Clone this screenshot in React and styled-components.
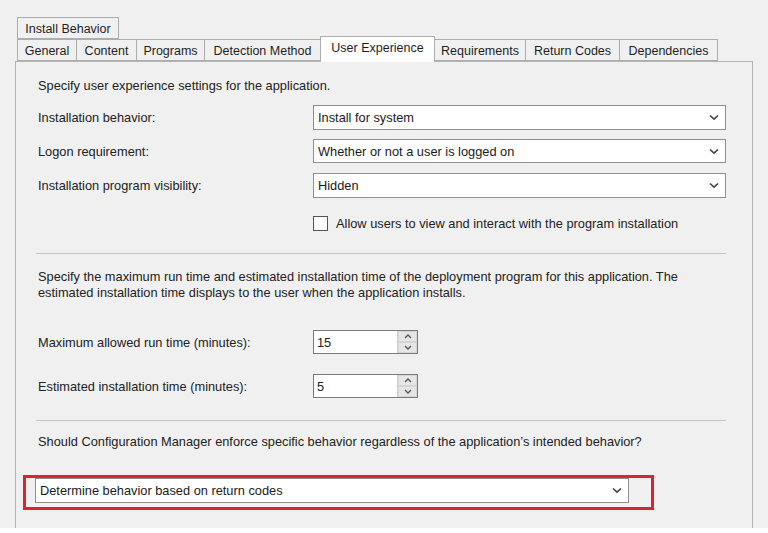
import React from "react";
import styled, { createGlobalStyle } from "styled-components";

const Global = createGlobalStyle`
  html, body { margin: 0; padding: 0; background: #ffffff; }
  body { font-family: "Liberation Sans", Arial, sans-serif; font-size: 12.8px; color: #222; }
  * { box-sizing: border-box; }
`;

const Window = styled.div`
  width: 768px;
  height: 528px;
  background: #f0f0f0;
  padding: 17px 0 0 15px;
  overflow: hidden;
  display: flex;
  flex-direction: column;
`;

const TabStrip = styled.div`
  display: flex;
  align-items: flex-end;
  height: 22px;
  flex: none;
  padding-left: 2px;
  position: relative;
  z-index: 1;
`;

const Tab = styled.div`
  height: ${(p) => (p.$active ? 26 : 22)}px;
  margin-bottom: ${(p) => (p.$active ? -1 : 0)}px;
  padding: ${(p) => (p.$active ? "3px 6px 0" : "3px 5px 0")};
  width: ${(p) => p.$w}px;
  flex: none;
  border: 1px solid #adadad;
  border-bottom: ${(p) => (p.$active ? "none" : "1px solid #adadad")};
  margin-left: -1px;
  background: ${(p) => (p.$active ? "#ffffff" : "#f0f0f0")};
  color: #1e1e1e;
  font-size: 12.5px;
  line-height: 16px;
  white-space: nowrap;
  text-align: center;
  &:first-child { margin-left: 0; }
`;

const Panel = styled.div`
  width: 738px;
  flex: 1;
  border: 1px solid #b4b4b4;
  border-bottom: none;
  background: #f0f0f0;
  padding: 16px 26px 0 22px;
  display: flex;
  flex-direction: column;
`;

const Text = styled.div`
  line-height: 16px;
  color: #222;
  margin-top: ${(p) => p.$mt || 0}px;
`;

const FieldRow = styled.div`
  display: flex;
  align-items: center;
  margin-top: ${(p) => p.$mt || 0}px;
`;

const Label = styled.div`
  width: 275px;
  flex: none;
  color: #222;
`;

const ComboBox = styled.div`
  flex: 1;
  height: ${(p) => p.$h || 25}px;
  border: 1px solid #8f8f8f;
  background: #ffffff;
  display: flex;
  align-items: center;
  padding: 0 6px 0 4px;
  color: #1a1a1a;
`;

const ComboText = styled.span`
  flex: 1;
  white-space: nowrap;
`;

const Chevron = () => (
  <svg width="10" height="7" viewBox="0 0 10 7">
    <path d="M1 1.5 L5 5.2 L9 1.5" fill="none" stroke="#444" strokeWidth="1.6" />
  </svg>
);

const SmallArrow = ({ up }) => (
  <svg width="8" height="5" viewBox="0 0 8 5">
    <path
      d={up ? "M1 4 L4 1 L7 4" : "M1 1 L4 4 L7 1"}
      fill="none"
      stroke="#555"
      strokeWidth="1.3"
    />
  </svg>
);

const CheckRow = styled.div`
  display: flex;
  align-items: center;
  margin: 18px 0 0 275px;
  gap: 8px;
`;

const CheckBox = styled.div`
  width: 15px;
  height: 15px;
  border: 1px solid #555;
  background: #fff;
`;

const Separator = styled.div`
  height: 1px;
  background: #c4c4c4;
  margin: ${(p) => p.$mt}px 0 0 -2px;
`;

const Spinner = styled.div`
  width: 105px;
  height: 24px;
  border: 1px solid #7a7a7a;
  background: #fff;
  display: flex;
`;

const SpinValue = styled.div`
  flex: 1;
  padding: 0 3px;
  display: flex;
  align-items: center;
`;

const SpinButtons = styled.div`
  width: 20px;
  display: flex;
  flex-direction: column;
  border-left: 1px solid #d0d0d0;
`;

const SpinButton = styled.div`
  flex: 1;
  background: #e6e6e6;
  border: 1px solid #d6d6d6;
  display: flex;
  align-items: center;
  justify-content: center;
`;

const Highlight = styled.div`
  width: 631px;
  margin: ${(p) => p.$mt}px 0 0 -15px;
  border: 3px solid #dc2430;
  padding: 0 22px 4px 9px;
`;

export default function App() {
  const tabs = [
    ["General", 60],
    ["Content", 61],
    ["Programs", 69],
    ["Detection Method", 117],
  ];
  const tabs2 = [
    ["Requirements", 92],
    ["Return Codes", 95],
    ["Dependencies", 99],
  ];
  return (
    <>
      <Global />
      <Window>
        <TabStrip>
          <Tab $w={102}>Install Behavior</Tab>
        </TabStrip>
        <TabStrip>
          {tabs.map(([t, w]) => (
            <Tab key={t} $w={w}>{t}</Tab>
          ))}
          <Tab $active $w={115}>User Experience</Tab>
          {tabs2.map(([t, w]) => (
            <Tab key={t} $w={w}>{t}</Tab>
          ))}
        </TabStrip>
        <Panel>
          <Text>Specify user experience settings for the application.</Text>
          <FieldRow $mt={11}>
            <Label>Installation behavior:</Label>
            <ComboBox>
              <ComboText>Install for system</ComboText>
              <Chevron />
            </ComboBox>
          </FieldRow>
          <FieldRow $mt={9}>
            <Label>Logon requirement:</Label>
            <ComboBox $h={24}>
              <ComboText>Whether or not a user is logged on</ComboText>
              <Chevron />
            </ComboBox>
          </FieldRow>
          <FieldRow $mt={10}>
            <Label>Installation program visibility:</Label>
            <ComboBox>
              <ComboText>Hidden</ComboText>
              <Chevron />
            </ComboBox>
          </FieldRow>
          <CheckRow>
            <CheckBox />
            <span>Allow users to view and interact with the program installation</span>
          </CheckRow>
          <Separator $mt={22} />
          <Text $mt={15}>
            Specify the maximum run time and estimated installation time of the deployment program for this application. The
            <br />
            estimated installation time displays to the user when the application installs.
          </Text>
          <FieldRow $mt={29}>
            <Label>Maximum allowed run time (minutes):</Label>
            <Spinner>
              <SpinValue>15</SpinValue>
              <SpinButtons>
                <SpinButton><SmallArrow up /></SpinButton>
                <SpinButton><SmallArrow /></SpinButton>
              </SpinButtons>
            </Spinner>
          </FieldRow>
          <FieldRow $mt={20}>
            <Label>Estimated installation time (minutes):</Label>
            <Spinner>
              <SpinValue>5</SpinValue>
              <SpinButtons>
                <SpinButton><SmallArrow up /></SpinButton>
                <SpinButton><SmallArrow /></SpinButton>
              </SpinButtons>
            </Spinner>
          </FieldRow>
          <Separator $mt={22} />
          <Text $mt={13}>
            Should Configuration Manager enforce specific behavior regardless of the application’s intended behavior?
          </Text>
          <Highlight $mt={25}>
            <ComboBox $h={25}>
              <ComboText>Determine behavior based on return codes</ComboText>
              <Chevron />
            </ComboBox>
          </Highlight>
        </Panel>
      </Window>
    </>
  );
}
